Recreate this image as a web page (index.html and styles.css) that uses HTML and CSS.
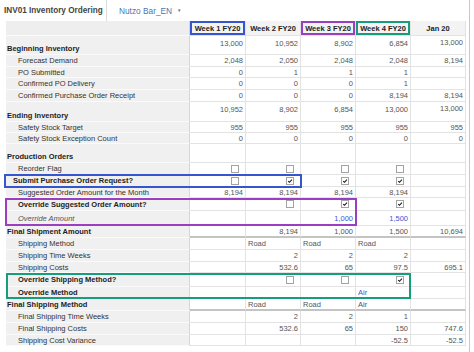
FILE: index.html
```html
<!DOCTYPE html>
<html lang="en">
<head>
    <meta charset="UTF-8">
    <title>INV01 Inventory Ordering</title>
    <link rel="stylesheet" href="styles.css">
</head>
<body>
    <div class="app">
        <div class="tabs">
            <div class="tab-title">INV01 Inventory Ordering</div>
            <div class="tab-page">Nutzo Bar_EN <span class="caret">&#9660;</span></div>
        </div>

        <div class="grid">
            <div class="row head">
                <div class="lbl"></div>
                <div class="c hl-blue">Week 1 FY20</div>
                <div class="c">Week 2 FY20</div>
                <div class="c hl-purple">Week 3 FY20</div>
                <div class="c hl-green">Week 4 FY20</div>
                <div class="c">Jan 20</div>
            </div>

            <!-- Inventory -->
            <div class="row sec">
                <div class="lbl top">Beginning Inventory</div>
                <div class="c">13,000</div><div class="c">10,952</div><div class="c">8,902</div><div class="c">6,854</div><div class="c hi">13,000</div>
            </div>
            <div class="row">
                <div class="lbl">Forecast Demand</div>
                <div class="c">2,048</div><div class="c">2,050</div><div class="c">2,048</div><div class="c">2,048</div><div class="c">8,194</div>
            </div>
            <div class="row h11">
                <div class="lbl">PO Submitted</div>
                <div class="c">0</div><div class="c">1</div><div class="c">1</div><div class="c">1</div><div class="c"></div>
            </div>
            <div class="row">
                <div class="lbl">Confirmed PO Delivery</div>
                <div class="c">0</div><div class="c">0</div><div class="c">0</div><div class="c">1</div><div class="c"></div>
            </div>
            <div class="row">
                <div class="lbl">Confirmed Purchase Order Receipt</div>
                <div class="c">0</div><div class="c">0</div><div class="c">0</div><div class="c">8,194</div><div class="c">8,194</div>
            </div>
            <div class="row sec h20">
                <div class="lbl top">Ending Inventory</div>
                <div class="c">10,952</div><div class="c">8,902</div><div class="c">6,854</div><div class="c">13,000</div><div class="c hi">13,000</div>
            </div>
            <div class="row h11">
                <div class="lbl">Safety Stock Target</div>
                <div class="c">955</div><div class="c">955</div><div class="c">955</div><div class="c">955</div><div class="c">955</div>
            </div>
            <div class="row h11">
                <div class="lbl">Safety Stock Exception Count</div>
                <div class="c">0</div><div class="c">0</div><div class="c">0</div><div class="c">0</div><div class="c">0</div>
            </div>

            <!-- Production -->
            <div class="row sec">
                <div class="lbl top">Production Orders</div>
                <div class="c"></div><div class="c"></div><div class="c"></div><div class="c"></div><div class="c"></div>
            </div>
            <div class="row">
                <div class="lbl">Reorder Flag</div>
                <div class="c ck"><span class="cb"></span></div>
                <div class="c ck"><span class="cb"></span></div>
                <div class="c ck"><span class="cb"></span></div>
                <div class="c ck"><span class="cb"></span></div>
                <div class="c"></div>
            </div>
            <div class="row">
                <div class="lbl strong mid">Submit Purchase Order Request?</div>
                <div class="c ck"><span class="cb"></span></div>
                <div class="c ck"><span class="cb on"><svg viewBox="0 0 8 8"><path d="M1.6 4.1 L3.3 5.7 L6.6 2.3"/></svg></span></div>
                <div class="c ck"><span class="cb on"><svg viewBox="0 0 8 8"><path d="M1.6 4.1 L3.3 5.7 L6.6 2.3"/></svg></span></div>
                <div class="c ck"><span class="cb on"><svg viewBox="0 0 8 8"><path d="M1.6 4.1 L3.3 5.7 L6.6 2.3"/></svg></span></div>
                <div class="c"></div>
            </div>
            <div class="row h11">
                <div class="lbl">Suggested Order Amount for the Month</div>
                <div class="c">8,194</div><div class="c">8,194</div><div class="c">8,194</div><div class="c">8,194</div><div class="c"></div>
            </div>
            <div class="row h13">
                <div class="lbl strong">Override Suggested Order Amount?</div>
                <div class="c"></div>
                <div class="c ck"><span class="cb"></span></div>
                <div class="c ck"><span class="cb on"><svg viewBox="0 0 8 8"><path d="M1.6 4.1 L3.3 5.7 L6.6 2.3"/></svg></span></div>
                <div class="c ck"><span class="cb on"><svg viewBox="0 0 8 8"><path d="M1.6 4.1 L3.3 5.7 L6.6 2.3"/></svg></span></div>
                <div class="c"></div>
            </div>
            <div class="row h15">
                <div class="lbl em">Override Amount</div>
                <div class="c"></div><div class="c"></div><div class="c blue">1,000</div><div class="c blue">1,500</div><div class="c"></div>
            </div>

            <!-- Shipping -->
            <div class="row thick">
                <div class="lbl top">Final Shipment Amount</div>
                <div class="c"></div><div class="c">8,194</div><div class="c">1,000</div><div class="c">1,500</div><div class="c">10,694</div>
            </div>
            <div class="row">
                <div class="lbl">Shipping Method</div>
                <div class="c"></div><div class="c l">Road</div><div class="c l">Road</div><div class="c l">Road</div><div class="c"></div>
            </div>
            <div class="row">
                <div class="lbl">Shipping Time Weeks</div>
                <div class="c"></div><div class="c">2</div><div class="c">2</div><div class="c">2</div><div class="c"></div>
            </div>
            <div class="row h11">
                <div class="lbl">Shipping Costs</div>
                <div class="c"></div><div class="c">532.6</div><div class="c">65</div><div class="c">97.5</div><div class="c">695.1</div>
            </div>
            <div class="row h14">
                <div class="lbl strong">Override Shipping Method?</div>
                <div class="c"></div>
                <div class="c ck"><span class="cb"></span></div>
                <div class="c ck"><span class="cb"></span></div>
                <div class="c ck"><span class="cb on"><svg viewBox="0 0 8 8"><path d="M1.6 4.1 L3.3 5.7 L6.6 2.3"/></svg></span></div>
                <div class="c"></div>
            </div>
            <div class="row">
                <div class="lbl strong">Override Method</div>
                <div class="c"></div><div class="c"></div><div class="c"></div><div class="c l blue">Air</div><div class="c"></div>
            </div>
            <div class="row thick">
                <div class="lbl top">Final Shipping Method</div>
                <div class="c"></div><div class="c l">Road</div><div class="c l">Road</div><div class="c l">Air</div><div class="c"></div>
            </div>
            <div class="row">
                <div class="lbl">Final Shipping Time Weeks</div>
                <div class="c"></div><div class="c">2</div><div class="c">2</div><div class="c">1</div><div class="c"></div>
            </div>
            <div class="row">
                <div class="lbl">Final Shipping Costs</div>
                <div class="c"></div><div class="c">532.6</div><div class="c">65</div><div class="c">150</div><div class="c">747.6</div>
            </div>
            <div class="row h11">
                <div class="lbl">Shipping Cost Variance</div>
                <div class="c"></div><div class="c"></div><div class="c"></div><div class="c">-52.5</div><div class="c">-52.5</div>
            </div>

            <!-- annotation frames over the rows -->
            <div class="frame frame-blue"></div>
            <div class="frame frame-purple"></div>
            <div class="frame frame-green"></div>
        </div>
    </div>
</body>
</html>
```

FILE: styles.css
```css
* {
    box-sizing: border-box;
}
body {
    margin: 0;
    font-family: "Liberation Sans", Arial, sans-serif;
    font-size: 7.5px;
    color: #333;
    background: #fff;
}
.app {
    width: 470px;
    height: 352px;
    border-right: 1px solid #c8c8c8;
}
.tabs {
    display: flex;
    height: 21px;
}
.tab-title {
    width: 107px;
    padding-left: 4px;
    border-right: 1px solid #dcdcdc;
    display: flex;
    align-items: center;
    font-size: 8.2px;
    font-weight: bold;
    color: #444;
}
.tab-page {
    padding-left: 12px;
    display: flex;
    align-items: center;
    font-size: 8.3px;
    color: #4a74b0;
}
.caret {
    margin-left: 5px;
    font-size: 4.5px;
    color: #5a6f8f;
}
.grid {
    position: relative;
    margin-left: 6px;
    width: 460px;
}
.row {
    display: grid;
    grid-template-columns: 184px 56px 55px 55px 55px 55px;
    height: 12px;
}
.row > div {
    display: flex;
    align-items: center;
    justify-content: flex-end;
    padding-right: 2px;
    white-space: nowrap;
    overflow: hidden;
    border-bottom: 1px solid #e3e3e3;
    border-right: 1px solid #e3e3e3;
    color: #555;
}
.row > .lbl {
    justify-content: flex-start;
    padding-left: 12px;
    background: #f0f0f0;
    border-bottom-color: #fafafa;
    border-right-color: #d6d6d6;
    color: #333;
}
.h11 { height: 11px; }
.h13 { height: 13px; }
.h14 { height: 14px; }
.h15 { height: 15px; }
.sec { height: 19px; }
.sec.h20 { height: 20px; }

.head {
    height: 15px;
}
.head > .c {
    justify-content: center;
    padding-right: 0;
    background: #f3f3f3;
    font-weight: bold;
    color: #222;
}
.head > .lbl {
    background: #eeeeee;
}
.hl-blue { box-shadow: inset 0 0 0 2px #3656cf; }
.hl-purple { box-shadow: inset 0 0 0 2px #9a3fc2; }
.hl-green { box-shadow: inset 0 0 0 2px #179c7c; }

.lbl.top {
    padding-left: 1px;
    font-weight: bold;
    color: #222;
}
.sec > .lbl {
    align-items: flex-end;
    padding-bottom: 1px;
}
.sec > .c {
    align-items: flex-start;
    padding-top: 3px;
}
.sec > .c.hi {
    padding-top: 2px;
}
.lbl.strong {
    font-weight: bold;
    color: #222;
}
.lbl.mid {
    padding-left: 7px;
}
.lbl.em {
    font-style: italic;
    color: #555;
}
.c.l {
    justify-content: flex-start;
    padding-left: 2px;
}
.c.blue {
    color: #3b55d9;
}
.c.ck {
    padding-right: 6px;
}
.thick > .c {
    border-bottom: 2px solid #c4c4c4;
}

.cb {
    display: block;
    width: 8px;
    height: 8px;
    border: 1px solid #a3a3a3;
    background: #fff;
}
.cb svg {
    display: block;
    width: 6px;
    height: 6px;
}
.cb svg path {
    fill: none;
    stroke: #1a1a1a;
    stroke-width: 1.5;
}

.frame {
    position: absolute;
    border: 2px solid;
    pointer-events: none;
}
.frame-blue {
    left: -2px;
    top: 153px;
    width: 298px;
    height: 14px;
    border-color: #3656cf;
}
.frame-purple {
    left: -1px;
    top: 177px;
    width: 352px;
    height: 28px;
    border-color: #9a3fc2;
}
.frame-green {
    left: 0;
    top: 252px;
    width: 405px;
    height: 26px;
    border-color: #179c7c;
}
```
